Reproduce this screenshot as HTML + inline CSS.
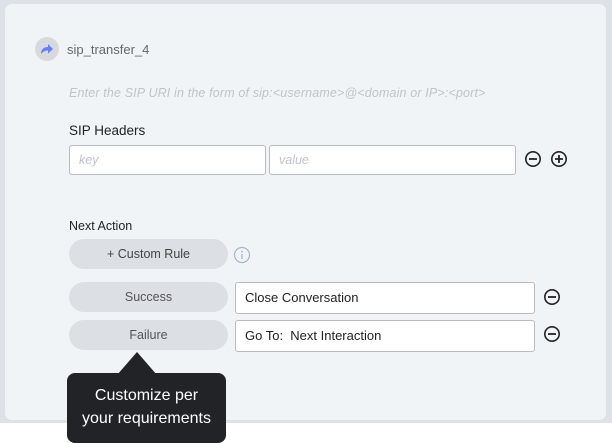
<!DOCTYPE html><html><head><style>
body{margin:0;width:612px;height:441px;overflow:hidden;background:#fff;font-family:"Liberation Sans",Arial,sans-serif;position:relative}
.bg{position:absolute;left:0;top:0;width:612px;height:423px;background:#dde1e8}
.card{position:absolute;left:5px;top:4px;width:601px;height:416px;background:#f1f4f7;border-radius:7px}
.a{position:absolute}
.inp{position:absolute;background:#fff;border:1px solid #b9bcc0;border-radius:3px;box-sizing:border-box;font-size:13px;color:#222;padding-left:9px;line-height:29px}
.ph{color:#c0c3c7;font-style:italic}
.pill{position:absolute;background:#dcdfe3;border-radius:15px;text-align:center;font-size:12.5px;color:#555;line-height:30px}
</style></head><body>
<div class="bg"></div><div class="card"></div>
<div class="a" style="left:35px;top:37px;width:24px;height:24px;border-radius:50%;background:#d7d9de"></div>
<svg class="a" style="left:40px;top:42px" width="14" height="14" viewBox="0 0 14 14"><path d="M1 12 C1 7 4 5 8 5 V2 L13 7 L8 11.5 V8.5 C5 8.5 3 9.5 1 12Z" fill="#6b7ef0"/></svg>
<div class="a" style="left:67px;top:42px;font-size:13px;color:#666">sip_transfer_4</div>
<div class="a ph" style="left:69px;top:86px;font-size:12.5px;letter-spacing:0.15px">Enter the SIP URI in the form of sip:&lt;username&gt;@&lt;domain or IP&gt;:&lt;port&gt;</div>
<div class="a" style="left:69px;top:123px;font-size:13.5px;color:#222">SIP Headers</div>
<div class="inp ph" style="left:69px;top:145px;width:197px;height:30px;font-size:12.5px">key</div>
<div class="inp ph" style="left:269px;top:145px;width:247px;height:30px;font-size:12.5px">value</div>
<svg class="a" style="left:524px;top:150px" width="18" height="18" viewBox="0 0 18 18"><circle cx="9" cy="9" r="7.2" fill="none" stroke="#222" stroke-width="1.6"/><path d="M5 9H13" stroke="#222" stroke-width="1.8"/></svg>
<svg class="a" style="left:550px;top:150px" width="18" height="18" viewBox="0 0 18 18"><circle cx="9" cy="9" r="7.2" fill="none" stroke="#222" stroke-width="1.6"/><path d="M5 9H13M9 5V13" stroke="#222" stroke-width="1.8"/></svg>
<div class="a" style="left:69px;top:219px;font-size:12.5px;color:#222">Next Action</div>
<div class="pill" style="left:69px;top:239px;width:159px;color:#444">+ Custom Rule</div>
<svg class="a" style="left:233px;top:246px" width="18" height="18" viewBox="0 0 18 18"><circle cx="9" cy="9" r="7.5" fill="none" stroke="#a9b3cc" stroke-width="1.2"/><path d="M9 8V13" stroke="#a9b3cc" stroke-width="1.3"/><circle cx="9" cy="5.7" r="0.9" fill="#a9b3cc"/></svg>
<div class="pill" style="left:69px;top:282px;width:159px">Success</div>
<div class="pill" style="left:69px;top:320px;width:159px">Failure</div>
<div class="inp" style="left:235px;top:282px;width:300px;height:32px;line-height:30px">Close Conversation</div>
<div class="inp" style="left:235px;top:320px;width:300px;height:32px;line-height:30px">Go To:&nbsp; Next Interaction</div>
<svg class="a" style="left:543px;top:288px" width="18" height="18" viewBox="0 0 18 18"><circle cx="9" cy="9" r="7.2" fill="none" stroke="#222" stroke-width="1.6"/><path d="M5 9H13" stroke="#222" stroke-width="1.8"/></svg>
<svg class="a" style="left:543px;top:325px" width="18" height="18" viewBox="0 0 18 18"><circle cx="9" cy="9" r="7.2" fill="none" stroke="#222" stroke-width="1.6"/><path d="M5 9H13" stroke="#222" stroke-width="1.8"/></svg>
<svg class="a" style="left:115px;top:351px" width="44" height="24" viewBox="0 0 44 24"><path d="M22 1 L42 24 H2Z" fill="#222326"/></svg>
<div class="a" style="left:67px;top:373px;width:159px;height:70px;background:#222326;border-radius:8px;color:#fff;font-size:16px;text-align:center;line-height:23px;padding-top:11px;box-sizing:border-box">Customize per<br>your requirements</div>
</body></html>
